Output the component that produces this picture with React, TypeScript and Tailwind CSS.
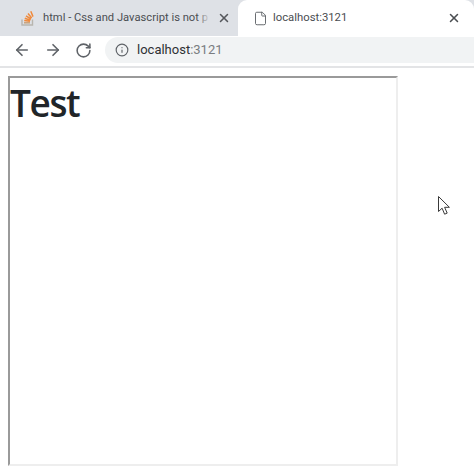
import React from 'react';
import { ArrowLeft, ArrowRight, RotateCw, Info, File, X } from 'lucide-react';

const StackIcon = () => (
  <svg width="14" height="16" viewBox="0 0 14 16" fill="none">
    <path d="M1 9.5v5.5h10.5v-5.5" stroke="#b8b5ae" strokeWidth="1.4" />
    <path d="M3 12.8h6" stroke="#c9a27a" strokeWidth="1.5" />
    <path d="M3.2 10.4l5.8.8M3.8 8.2l5.6 2M5 5.8l5 3.2M7 3.4l3.7 4.5M9.8 1.2l2.2 5.4" stroke="#f08a3c" strokeWidth="1.5" />
  </svg>
);

const App: React.FC = () => {
  return (
    <div className="w-[474px] h-[475px] bg-white overflow-hidden font-['Roboto','Liberation_Sans',sans-serif]">
      {/* tab strip */}
      <div className="flex h-[36px] bg-[#dee1e6]">
        <div className="w-[238px] flex items-center pl-[21px]">
          <StackIcon />
          <div className="relative ml-[8px] w-[167px] overflow-hidden whitespace-nowrap text-[11.2px] text-[#4b4e52]">
            html - Css and Javascript is not p
            <div className="absolute right-0 top-0 bottom-0 w-[13px] bg-gradient-to-r from-transparent to-[#dee1e6]" />
          </div>
          <X size={14} strokeWidth={2.6} className="ml-[7px] text-[#55585c]" />
        </div>
        <div className="flex-1 flex items-center bg-white rounded-t-[9px] pl-[15px] pr-[13px]">
          <File size={15} strokeWidth={1.5} className="text-[#5f6368]" />
          <span className="ml-[5px] flex-1 text-[11.3px] text-[#4a4d51]">localhost:3121</span>
          <X size={14} strokeWidth={2.6} className="text-[#4b4e52]" />
        </div>
      </div>

      {/* toolbar */}
      <div className="flex items-center h-[32px] border-b-2 border-[#e3e4e6] pl-[13px] pb-[2px]">
        <ArrowLeft size={18} strokeWidth={2.2} className="text-[#5f6368]" />
        <ArrowRight size={18} strokeWidth={2.2} className="ml-[13px] text-[#5f6368]" />
        <RotateCw size={17} strokeWidth={2.2} className="ml-[13px] text-[#5f6368]" />
        <div className="ml-[13px] flex-1 flex items-center h-[26px] bg-[#f1f3f4] rounded-l-[13px] pl-[10px]">
          <Info size={14} strokeWidth={2} className="text-[#5f6368]" />
          <span className="ml-[8px] text-[13px] text-[#2f3134]">
            localhost<span className="text-[#7a7d80]">:3121</span>
          </span>
        </div>
      </div>

      {/* page */}
      <div className="relative pl-[8px] pt-[8px]">
        <div className="w-[390px] h-[390px] border-2 border-t-[#9a9a9a] border-l-[#9a9a9a] border-r-[#eeeeee] border-b-[#eeeeee]">
          <h1 className="text-[37px] leading-[50px] tracking-[-1.4px] font-semibold text-[#212529] font-['Open_Sans',sans-serif]">Test</h1>
        </div>
        <svg className="absolute left-[437px] top-[127px]" width="14" height="21" viewBox="0 0 14 21">
          <path d="M1.5 1.5v15l3.6-3.3 2.5 6 2.6-1.1-2.6-5.8h4.8z" fill="#fff" stroke="#3a3a3a" strokeWidth="1" />
        </svg>
      </div>
    </div>
  );
};

export default App;
